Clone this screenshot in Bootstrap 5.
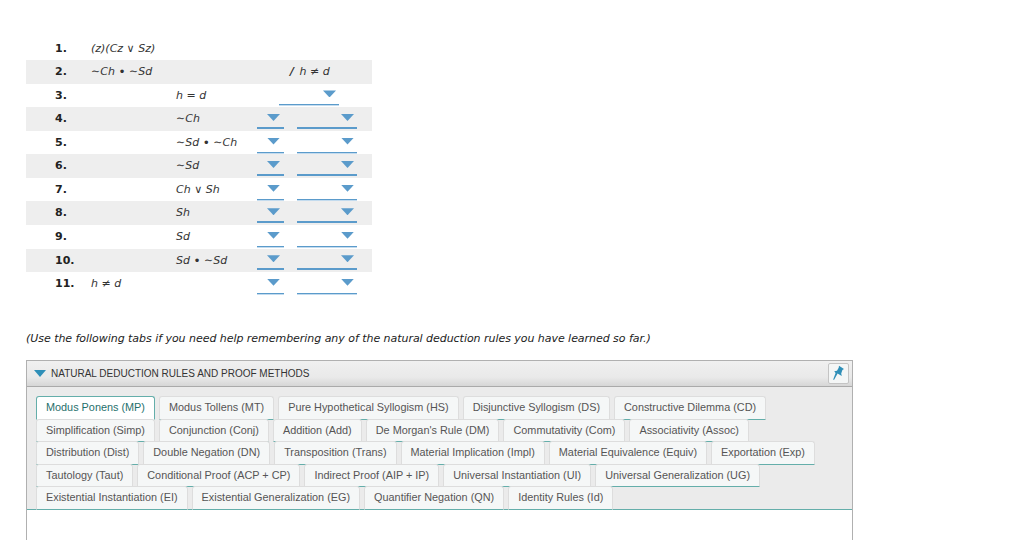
<!DOCTYPE html>
<html><head><meta charset="utf-8">
<link href="https://cdn.jsdelivr.net/npm/bootstrap@5.3.0/dist/css/bootstrap.min.css" rel="stylesheet">
<style>
html,body{height:540px;overflow:hidden;background:#fff}
body{font-family:"DejaVu Sans",sans-serif;font-size:11px;color:#333;padding:36.6px 0 0 26px}
.proof{width:346px}
.pr{display:flex;align-items:center;height:23.55px;position:relative;padding-top:1px}
.pr:nth-child(even){background:#eee}
.num{width:65px;padding-left:29px;font-weight:700;flex:none;color:#222}
.prem{width:85px;flex:none;font-style:italic}
.der{width:81px;flex:none;font-style:italic}
.dot{font-size:12px;line-height:1;font-style:normal;vertical-align:-1px}
.sel{display:block;position:relative;height:18px;border-bottom:1px solid #5b9bcb;box-shadow:0 1px 0 #c3dbee;margin-top:1px}
.pr:nth-child(even) .sel{border-bottom-width:2px;box-shadow:none}
.sel::after{content:"";position:absolute;right:3px;top:3px;width:13px;height:7px;background:#5b9bcb;clip-path:polygon(0 0,100% 0,50% 100%)}
.s1{width:27px}
.s1::after{right:4px}
.s2{width:60px;margin-left:13px}
.s3{width:60px;margin-left:22px}
.goal{font-style:italic;margin-left:33px}
.goal b{margin-right:2px}
.note{font-style:italic;margin:35.35px 0 0;color:#222;line-height:16px;letter-spacing:-.04px}
.accord{width:827px;margin-top:13px;border:1px solid #b0b0b0;border-bottom:0;height:190px}
.acc-h{height:26px;background:linear-gradient(#f0f0f0,#e9e9e9 65%,#d6d6d6);border-bottom:1px solid #aaa;font:10px "Liberation Sans",sans-serif;color:#333;padding-left:7px}
.tri{border:6px solid transparent;border-top:7px solid #2f8fb8;border-bottom:0;margin-right:5px;margin-top:1px}
.pin{width:21px;height:21px;margin-right:3px;background:#f4f6f6;border:1px solid #c4c4c4;border-radius:2px}
.tabbar{background:#ebebeb;padding:9px 9px 0;border-bottom:1px solid #64aeaa;font-family:"Liberation Sans",sans-serif}
.tabbar .nav-item{margin:0 4px -1px 0;height:23.6px}
.tabbar .nav-link{display:block;height:23.6px;padding:0 9px;line-height:21px;font-size:10.87px;color:#555;background:#f5f7f7;border:1px solid #ddd;border-bottom-color:#64aeaa;border-radius:3px 3px 0 0}
.tabbar .nav-link.active{background:#fff;color:#1f6f6c;border-color:#64aeaa #64aeaa #fff}
</style></head>
<body>
<div class="proof">
<div class="pr"><span class="num">1.</span><span class="prem">(z)(Cz ∨ Sz)</span></div>
<div class="pr"><span class="num">2.</span><span class="prem">∼Ch <span class="dot">•</span> ∼Sd</span><span class="der"></span><span class="goal"><b>/</b> h ≠ d</span></div>
<div class="pr"><span class="num">3.</span><span class="prem"></span><span class="der">h = d</span><span class="sel s3"></span></div>
<div class="pr"><span class="num">4.</span><span class="prem"></span><span class="der">∼Ch</span><span class="sel s1"></span><span class="sel s2"></span></div>
<div class="pr"><span class="num">5.</span><span class="prem"></span><span class="der">∼Sd <span class="dot">•</span> ∼Ch</span><span class="sel s1"></span><span class="sel s2"></span></div>
<div class="pr"><span class="num">6.</span><span class="prem"></span><span class="der">∼Sd</span><span class="sel s1"></span><span class="sel s2"></span></div>
<div class="pr"><span class="num">7.</span><span class="prem"></span><span class="der">Ch ∨ Sh</span><span class="sel s1"></span><span class="sel s2"></span></div>
<div class="pr"><span class="num">8.</span><span class="prem"></span><span class="der">Sh</span><span class="sel s1"></span><span class="sel s2"></span></div>
<div class="pr"><span class="num">9.</span><span class="prem"></span><span class="der">Sd</span><span class="sel s1"></span><span class="sel s2"></span></div>
<div class="pr"><span class="num">10.</span><span class="prem"></span><span class="der">Sd <span class="dot">•</span> ∼Sd</span><span class="sel s1"></span><span class="sel s2"></span></div>
<div class="pr"><span class="num">11.</span><span class="prem">h ≠ d</span><span class="der"></span><span class="sel s1"></span><span class="sel s2"></span></div>
</div>
<p class="note">(Use the following tabs if you need help remembering any of the natural deduction rules you have learned so far.)</p>
<div class="accord">
<div class="acc-h d-flex align-items-center"><span class="tri"></span><span class="flex-grow-1">NATURAL DEDUCTION RULES AND PROOF METHODS</span>
<span class="pin d-flex align-items-center justify-content-center"><svg width="13" height="16" viewBox="0 0 13 16"><path d="M7 .8l5 3.200-1.600 1-1.200 3.400.6 2.600-4.200-2.400L2 15l-.8-.5L3.600 8 2.200 6.200l2.800-.4L6.700 2.800z" fill="#2f8fb8"/></svg></span></div>
<ul class="nav tabbar">
<li class="nav-item"><a class="nav-link active" href="#">Modus Ponens (MP)</a></li>
<li class="nav-item"><a class="nav-link" href="#">Modus Tollens (MT)</a></li>
<li class="nav-item"><a class="nav-link" href="#">Pure Hypothetical Syllogism (HS)</a></li>
<li class="nav-item"><a class="nav-link" href="#">Disjunctive Syllogism (DS)</a></li>
<li class="nav-item"><a class="nav-link" href="#">Constructive Dilemma (CD)</a></li>
<li class="nav-item"><a class="nav-link" href="#">Simplification (Simp)</a></li>
<li class="nav-item"><a class="nav-link" href="#">Conjunction (Conj)</a></li>
<li class="nav-item"><a class="nav-link" href="#">Addition (Add)</a></li>
<li class="nav-item"><a class="nav-link" href="#">De Morgan's Rule (DM)</a></li>
<li class="nav-item"><a class="nav-link" href="#">Commutativity (Com)</a></li>
<li class="nav-item"><a class="nav-link" href="#">Associativity (Assoc)</a></li>
<li class="nav-item"><a class="nav-link" href="#">Distribution (Dist)</a></li>
<li class="nav-item"><a class="nav-link" href="#">Double Negation (DN)</a></li>
<li class="nav-item"><a class="nav-link" href="#">Transposition (Trans)</a></li>
<li class="nav-item"><a class="nav-link" href="#">Material Implication (Impl)</a></li>
<li class="nav-item"><a class="nav-link" href="#">Material Equivalence (Equiv)</a></li>
<li class="nav-item"><a class="nav-link" href="#">Exportation (Exp)</a></li>
<li class="nav-item"><a class="nav-link" href="#">Tautology (Taut)</a></li>
<li class="nav-item"><a class="nav-link" href="#">Conditional Proof (ACP + CP)</a></li>
<li class="nav-item"><a class="nav-link" href="#">Indirect Proof (AIP + IP)</a></li>
<li class="nav-item"><a class="nav-link" href="#">Universal Instantiation (UI)</a></li>
<li class="nav-item"><a class="nav-link" href="#">Universal Generalization (UG)</a></li>
<li class="nav-item"><a class="nav-link" href="#">Existential Instantiation (EI)</a></li>
<li class="nav-item"><a class="nav-link" href="#">Existential Generalization (EG)</a></li>
<li class="nav-item"><a class="nav-link" href="#">Quantifier Negation (QN)</a></li>
<li class="nav-item"><a class="nav-link" href="#">Identity Rules (Id)</a></li>
</ul>
</div>
<script src="https://cdn.jsdelivr.net/npm/bootstrap@5.3.0/dist/js/bootstrap.bundle.min.js"></script>
</body></html>
